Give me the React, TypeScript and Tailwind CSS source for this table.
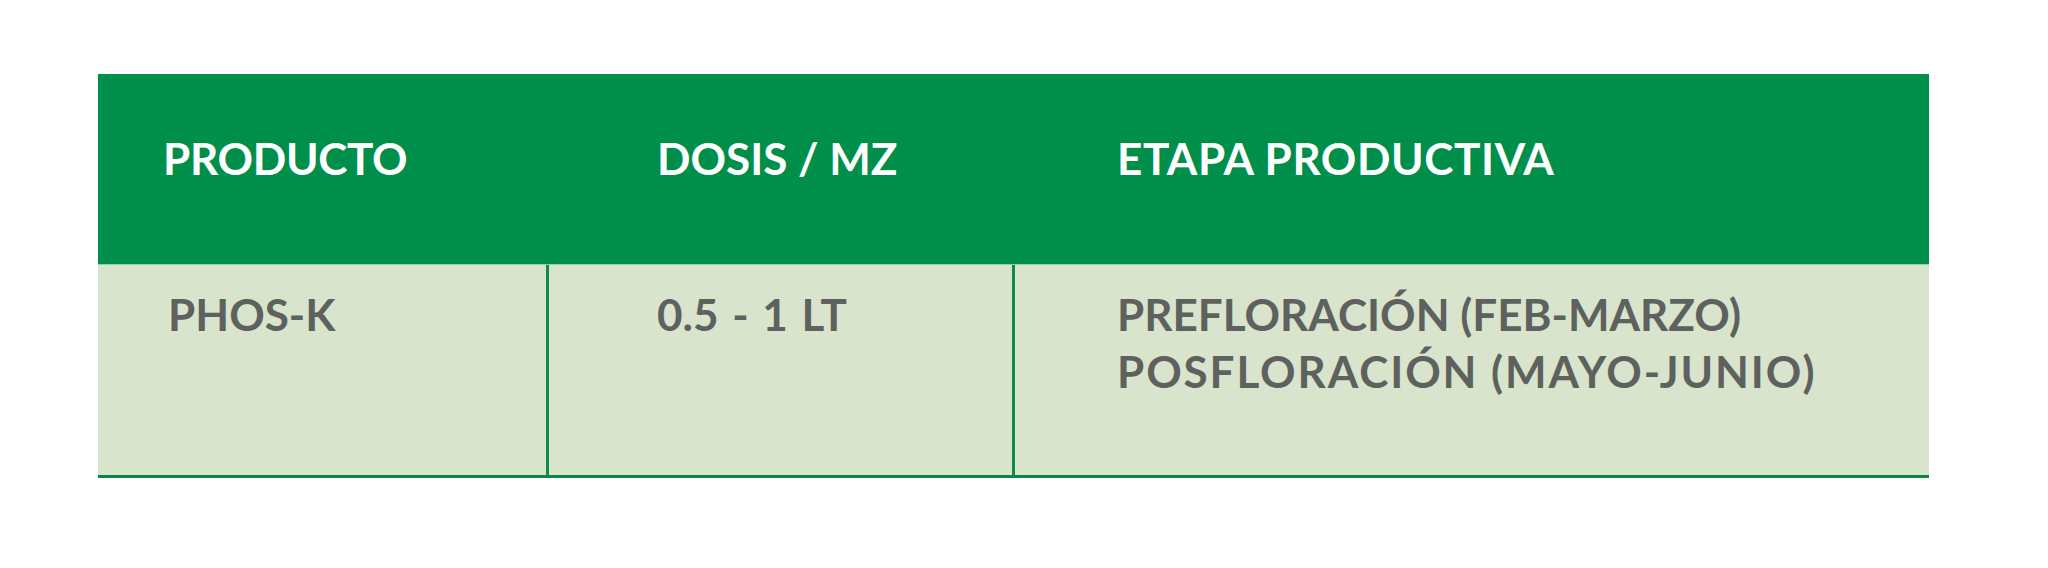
export default function App() {
  const font = { fontFamily: 'Lato, "Open Sans", sans-serif' }
  return (
    <div className="w-[2048px] h-[568px] bg-white pt-[74px] pl-[98px]" style={font}>
      <div className="w-[1831px]">
        {/* header */}
        <div className="grid grid-cols-[449px_466px_916px] h-[191px] bg-[#008f4b] text-white text-[44px] font-bold leading-[57px] border-b border-[#8fd0a6]">
          <div className="pt-[56px] pl-[65px] tracking-[-0.3px]">PRODUCTO</div>
          <div className="pt-[56px] pl-[110px]">DOSIS / MZ</div>
          <div className="pt-[56px] pl-[104px] tracking-[0.6px]">ETAPA PRODUCTIVA</div>
        </div>
        {/* body */}
        <div className="grid grid-cols-[451px_466px_914px] h-[213px] bg-[#d8e4cc] text-[#5e615e] text-[44px] font-bold leading-[57px] border-b-[3px] border-[#0c8644]">
          <div className="pt-[21px] pl-[70px] border-r-[3px] border-[#0f8a47]">PHOS-K</div>
          <div className="pt-[21px] pl-[108px] border-r-[3px] border-[#0f8a47] [word-spacing:3px]">0.5 - 1 LT</div>
          <div className="pt-[21px] pl-[102px]">
            <div>PREFLORACIÓN (FEB-MARZO)</div>
            <div className="tracking-[1.9px]">POSFLORACIÓN (MAYO-JUNIO)</div>
          </div>
        </div>
      </div>
    </div>
  )
}
